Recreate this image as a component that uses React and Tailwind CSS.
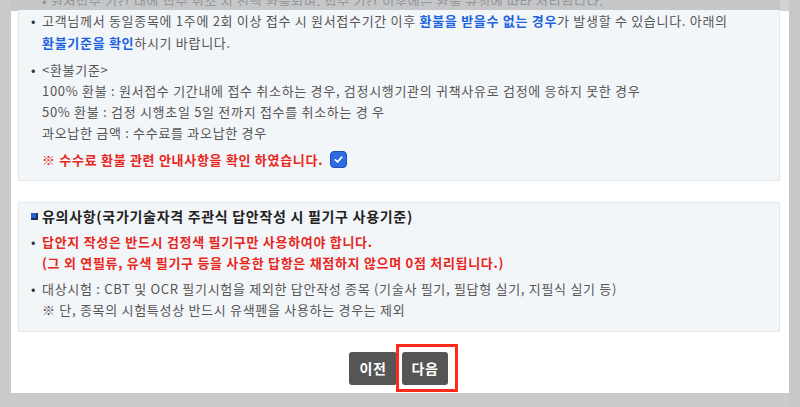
export default function App() {
    const font = { fontFamily: '"Noto Sans CJK KR", "Noto Sans", sans-serif' };

    return (
        <div className="w-[800px] h-[407px] bg-[#cbcbcb] flex overflow-hidden tracking-[0.7px]" style={font}>
            {/* LEFT GUTTER */}
            <div className="w-[11px] shrink-0 bg-[#cbcbcb]" />

            {/* MAIN */}
            <div className="flex-1 bg-white flex flex-col">
                {/* dimmed row on top */}
                <div className="h-[11px] flex shrink-0">
                    <div className="flex-1 bg-[#c4c6c8] overflow-hidden">
                        <p className="relative -top-[5px] text-[13px] leading-[11px] h-[11px] text-[#939597] pl-[31px] whitespace-nowrap overflow-hidden">
                            • 원서접수 기간 내에 접수 취소 시 전액 환불되며, 접수 기간 이후에는 환불 규정에 따라 처리됩니다.
                        </p>
                    </div>
                    <div className="w-[9px] bg-[#d3d3d3]" />
                </div>

                <div className="pl-[7px] pr-[9px] flex flex-col">
                    {/* REFUND NOTICE */}
                    <div className="bg-[#f3f6f9] border-x border-b border-[#e4e8eb] pl-[12px] pr-3 pb-[10px] -mt-[1px]">
                        <ul className="text-[13px] leading-[21px] text-[#555]">
                            <li className="flex mb-[5px]">
                                <span className="w-[11px] shrink-0 text-[#333] tracking-normal">•</span>
                                <p className="leading-[22px]">
                                    고객님께서 동일종목에 1주에 2회 이상 접수 시 원서접수기간 이후{" "}
                                    <b className="text-[#1b63e0]">환불을 받을수 없는 경우</b>가 발생할 수 있습니다. 아래의
                                    <br />
                                    <b className="text-[#1b63e0]">환불기준을 확인</b>하시기 바랍니다.
                                </p>
                            </li>
                            <li className="flex">
                                <span className="w-[11px] shrink-0 text-[#333] tracking-normal">•</span>
                                <div>
                                    <p>&lt;환불기준&gt;</p>
                                    <p>100% 환불 : 원서접수 기간내에 접수 취소하는 경우, 검정시행기관의 귀책사유로 검정에 응하지 못한 경우</p>
                                    <p>50% 환불 : 검정 시행초일 5일 전까지 접수를 취소하는 경 우</p>
                                    <p>과오납한 금액 : 수수료를 과오납한 경우</p>
                                    <p className="mt-[6px] flex items-center gap-[7px] text-[#e8261c] font-bold">
                                        ※ 수수료 환불 관련 안내사항을 확인 하였습니다.
                                        <span className="w-[17px] h-[17px] rounded-[4px] border-[1.5px] border-[#1d4fb8] bg-[#2d6de0] flex items-center justify-center p-[1px]">
                                            <svg viewBox="0 0 12 12" className="w-[11px] h-[11px]">
                                                <path d="M2.5 6.3 L5 8.6 L9.6 3.4" fill="none" stroke="white" strokeWidth="1.8" strokeLinecap="round" strokeLinejoin="round" />
                                            </svg>
                                        </span>
                                    </p>
                                </div>
                            </li>
                        </ul>
                    </div>

                    {/* PEN NOTICE */}
                    <div className="mt-[21px] bg-[#f3f6f9] border border-[#e4e8eb] pl-[12px] pr-3 pt-[3px] pb-[11px]">
                        <h3 className="flex items-center text-[14px] leading-[21px] font-bold text-[#222]">
                            <span className="w-[11px] shrink-0 flex">
                                <span className="w-[7px] h-[7px] bg-[#2a63c8] border-r-2 border-b-2 border-[#1c2f5e]" />
                            </span>
                            유의사항(국가기술자격 주관식 답안작성 시 필기구 사용기준)
                        </h3>
                        <ul className="text-[13px] leading-[21px] mt-[4px]">
                            <li className="flex mb-[5px] text-[#e8261c] font-bold">
                                <span className="w-[11px] shrink-0 text-[#333] font-normal tracking-normal">•</span>
                                <div>
                                    <p>답안지 작성은 반드시 검정색 필기구만 사용하여야 합니다.</p>
                                    <p>(그 외 연필류, 유색 필기구 등을 사용한 답항은 채점하지 않으며 0점 처리됩니다.)</p>
                                </div>
                            </li>
                            <li className="flex text-[#555]">
                                <span className="w-[11px] shrink-0 text-[#333] tracking-normal">•</span>
                                <div>
                                    <p>대상시험 : CBT 및 OCR 필기시험을 제외한 답안작성 종목 (기술사 필기, 필답형 실기, 지필식 실기 등)</p>
                                    <p>※ 단, 종목의 시험특성상 반드시 유색펜을 사용하는 경우는 제외</p>
                                </div>
                            </li>
                        </ul>
                    </div>
                </div>

                {/* BUTTONS */}
                <div className="mt-[20px] flex justify-center gap-[5px] pr-[3px]">
                    <button className="w-[48px] h-[33px] rounded-[3px] bg-[#555] text-white text-[14px] font-bold">
                        이전
                    </button>
                    <div className="relative">
                        <button className="w-[46px] h-[33px] rounded-[3px] bg-[#555] text-white text-[14px] font-bold">
                            다음
                        </button>
                        <div className="absolute -left-[6px] -top-[8px] w-[62px] h-[48px] border-[3px] border-[#ff2a1a]" />
                    </div>
                </div>

                <div className="flex-1" />
                <div className="h-[14px] bg-[#cbcbcb] shrink-0" />
            </div>

            {/* RIGHT GUTTER */}
            <div className="w-[11px] shrink-0 bg-[#c8c8c8]" />
        </div>
    );
}
